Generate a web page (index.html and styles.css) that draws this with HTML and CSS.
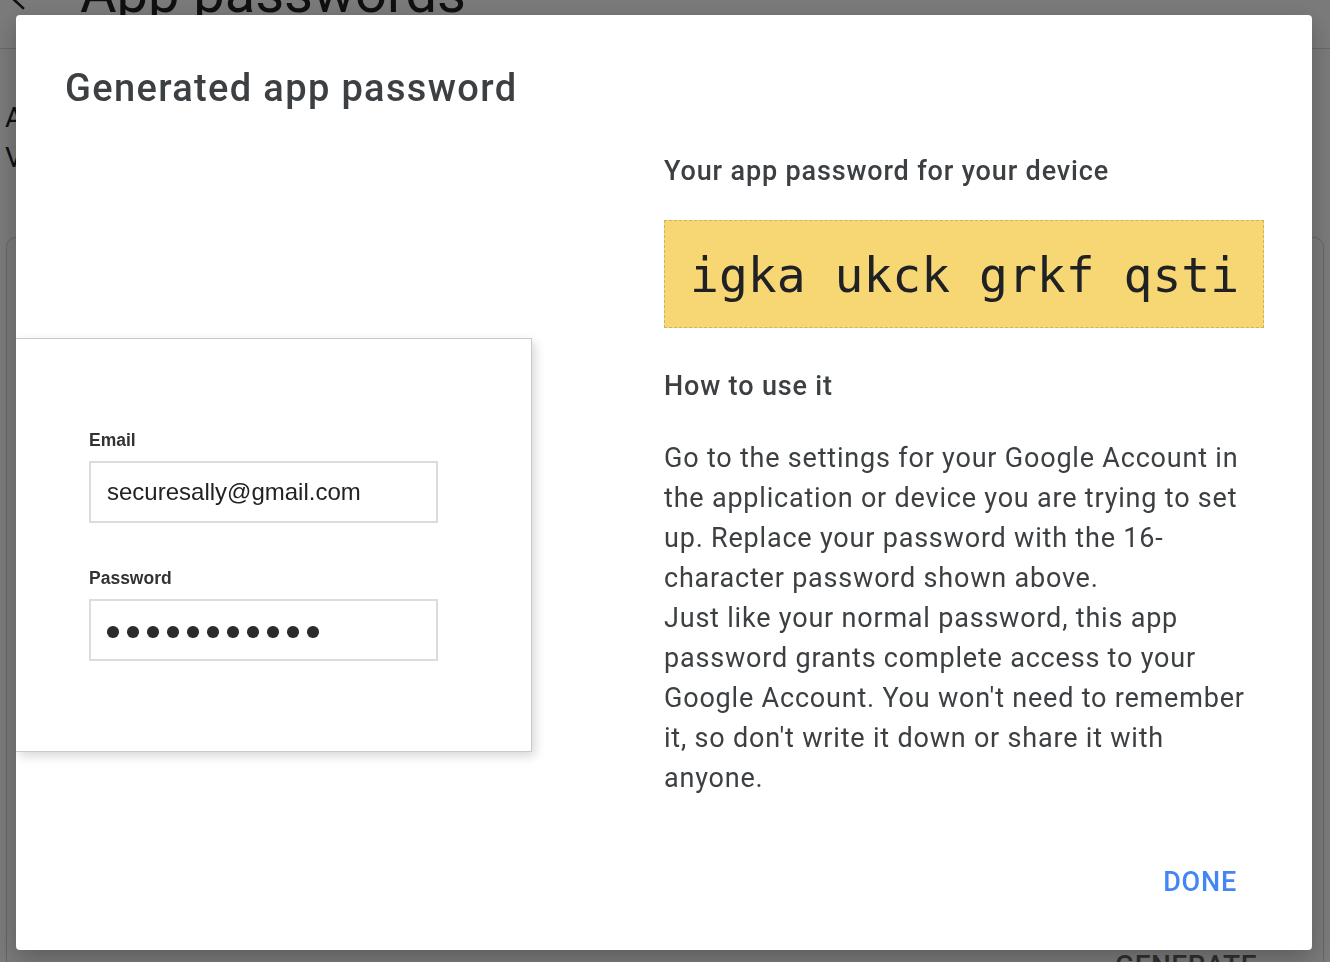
FILE: index.html
```html
<!DOCTYPE html>
<html lang="en">
<head>
<meta charset="utf-8">
<title>App passwords</title>
<link rel="stylesheet" href="styles.css">
</head>
<body>
<div class="page">
  <header class="topbar">
    <svg class="back" width="24" height="32" viewBox="0 0 24 32" aria-hidden="true"><path d="M19 6 L6 18 L19 30" fill="none" stroke="#202124" stroke-width="2.6" stroke-linecap="square"/></svg>
    <h1 class="page-title">App passwords</h1>
  </header>
  <main class="content">
    <p class="intro">App passwords let you sign in to your Google Account from apps on devices that don't support 2-Step</p>
    <p class="intro">Verification. You'll only need to enter it once so you don't need to remember it.</p>
    <section class="bg-card">
      <span class="bg-button">GENERATE</span>
    </section>
  </main>
</div>

<div class="scrim"></div>

<div class="dialog" role="dialog" aria-labelledby="dlg-title">
  <h2 class="dialog-title" id="dlg-title">Generated app password</h2>
  <div class="dialog-body">
    <div class="illustration">
      <div class="mock-card">
        <div class="mock-label">Email</div>
        <div class="mock-input">securesally@gmail.com</div>
        <div class="mock-label mock-label-gap">Password</div>
        <div class="mock-input">
          <span class="dots">
            <i class="dot"></i><i class="dot"></i><i class="dot"></i><i class="dot"></i><i class="dot"></i><i class="dot"></i><i class="dot"></i><i class="dot"></i><i class="dot"></i><i class="dot"></i><i class="dot"></i>
          </span>
        </div>
      </div>
    </div>
    <div class="details">
      <h3 class="subhead">Your app password for your device</h3>
      <div class="pw-box">igka ukck grkf qsti</div>
      <h3 class="subhead subhead-how">How to use it</h3>
      <div class="instructions">
        <p>Go to the settings for your Google Account in the application or device you are trying to set up. Replace your password with the 16-character password shown above.</p>
        <p>Just like your normal password, this app password grants complete access to your Google Account. You won't need to remember it, so don't write it down or share it with anyone.</p>
      </div>
      <div class="actions">
        <button class="btn-done" type="button">DONE</button>
      </div>
    </div>
  </div>
</div>
</body>
</html>
```

FILE: styles.css
```css
html, body {
  margin: 0;
  padding: 0;
  height: 100%;
  overflow: hidden;
  background: #ffffff;
  font-family: Roboto, "Noto Sans", "Liberation Sans", sans-serif;
}

/* ---------- background page ---------- */
.page {
  width: 1330px;
  height: 962px;
  overflow: hidden;
}

.topbar {
  height: 48px;
  border-bottom: 1px solid #d5d7db;
  display: flex;
  align-items: flex-start;
  gap: 52px;
  padding-left: 4px;
}

.back {
  margin-top: -22px;
  flex: none;
}

.page-title {
  margin: -35px 0 0 0;
  font-size: 56px;
  line-height: 56px;
  font-weight: 400;
  color: #202124;
  white-space: nowrap;
}

.content {
  padding: 49px 0 0 5px;
}

.intro {
  margin: 0;
  font-size: 28px;
  line-height: 40px;
  color: #202124;
  white-space: nowrap;
}

.bg-card {
  margin: 59px 0 0 1px;
  width: 1250px;
  height: 900px;
  border: 1px solid #d0d2d6;
  border-radius: 10px;
  padding: 712px 66px 0 0;
  display: flex;
  justify-content: flex-end;
  align-items: flex-start;
}

.bg-button {
  font-size: 28px;
  line-height: 32px;
  font-weight: 500;
  color: #5f6368;
  letter-spacing: 0.5px;
}

/* ---------- scrim ---------- */
.scrim {
  position: fixed;
  inset: 0;
  background: rgba(0, 0, 0, 0.52);
}

/* ---------- dialog ---------- */
.dialog {
  position: fixed;
  left: 16px;
  top: 15px;
  width: 1296px;
  height: 935px;
  box-sizing: border-box;
  background: #ffffff;
  border-radius: 4px;
  overflow: hidden;
  padding-top: 50px;
  box-shadow: 0 8px 24px rgba(0, 0, 0, 0.25);
  color: #3c4043;
}

.dialog-title {
  margin: 0 0 0 49px;
  font-size: 38px;
  line-height: 46px;
  font-weight: 500;
  letter-spacing: 1.35px;
  color: #3c4043;
}

.dialog-body {
  display: flex;
  margin-top: 44px;
}

.illustration {
  flex: 0 0 648px;
  padding-top: 183px;
}

.mock-card {
  width: 442px;
  padding: 91px 0 90px 73px;
  border: 1px solid #c9c9c9;
  border-left: none;
  background: #ffffff;
  box-shadow: 3px 4px 10px rgba(0, 0, 0, 0.16);
  font-family: "Liberation Sans", Arial, sans-serif;
}

.mock-label {
  font-size: 17.5px;
  line-height: 20px;
  font-weight: 700;
  color: #333333;
}

.mock-label-gap {
  margin-top: 45px;
}

.mock-input {
  margin-top: 11px;
  width: 349px;
  height: 62px;
  box-sizing: border-box;
  border: 2px solid #dcdcdc;
  padding-left: 16px;
  display: flex;
  align-items: center;
  font-size: 24px;
  color: #222222;
}

.dots {
  display: flex;
  gap: 8.5px;
  margin-top: 4px;
}

.dot {
  width: 11.5px;
  height: 11.5px;
  border-radius: 50%;
  background: #2b2b2b;
}

.details {
  flex: 0 0 600px;
}

.subhead {
  margin: 0;
  font-size: 27px;
  line-height: 32px;
  font-weight: 500;
  letter-spacing: 0.85px;
  color: #3c4043;
}

.subhead-how {
  margin-top: 42px;
}

.pw-box {
  margin-top: 33px;
  height: 108px;
  box-sizing: border-box;
  border: 1px dashed #d2b35a;
  background: #f7d774;
  padding: 26px 0 0 25px;
  font-family: "DejaVu Sans Mono", "Liberation Mono", monospace;
  font-size: 48px;
  line-height: 56px;
  color: #202124;
  white-space: nowrap;
}

.instructions {
  margin-top: 36px;
}

.instructions p {
  margin: 0;
  font-size: 27px;
  line-height: 40px;
  font-weight: 400;
  letter-spacing: 0.8px;
  color: #3c4043;
}

.actions {
  display: flex;
  justify-content: flex-end;
  margin-top: 68px;
  padding-right: 27px;
}

.btn-done {
  border: none;
  background: none;
  padding: 0;
  font-family: Roboto, "Noto Sans", sans-serif;
  font-size: 27px;
  line-height: 32px;
  font-weight: 500;
  letter-spacing: 0.8px;
  color: #4285f4;
  cursor: pointer;
}
```
